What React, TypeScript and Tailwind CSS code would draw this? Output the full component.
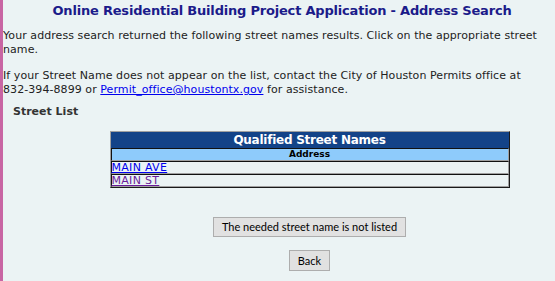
import React from "react";

export default function App() {
  return (
    <div className="w-[555px] h-[281px] overflow-hidden bg-[#ebf3f4] border-l-[3px] border-[#c865a3] font-['DejaVu_Sans',Verdana,sans-serif] text-[#222]">
      <h1 className="pt-[2px] pl-[6px] text-center text-[13px] tracking-[-0.2px] leading-[17px] font-bold text-[#1b1b8a]">
        Online Residential Building Project Application - Address Search
      </h1>
      <p className="mt-[10px] text-[11px] tracking-[0.07px] leading-[14px]">
        Your address search returned the following street names results. Click on the appropriate street name.
      </p>
      <p className="mt-[12px] text-[11px] tracking-[0.07px] leading-[14px]">
        If your Street Name does not appear on the list, contact the City of Houston Permits office at{" "}
        <span className="whitespace-nowrap">832-394-8899</span> or{" "}
        <a href="#" className="text-[#0000ee] underline">Permit_office@houstontx.gov</a> for assistance.
      </p>
      <div className="mt-[8px] pl-[10px] text-[11px] leading-[14px] font-bold text-[#333]">Street List</div>
      <div className="mt-[12px] pl-[61px] flex justify-center">
        <table className="w-[400px] border-separate border-spacing-0 border-t border-l border-t-[#a0a0a0] border-l-[#a0a0a0] border-r border-b border-r-[#1a1a1a] border-b-[#1a1a1a]">
          <tbody>
            <tr>
              <td className="bg-[#134388] text-white text-center font-bold text-[12px] tracking-[-0.25px] leading-[14px] border border-[#134388]">
                Qualified Street Names
              </td>
            </tr>
            <tr>
              <td className="bg-[#8ecbfb] text-black text-center font-bold text-[9px] leading-[11px] border border-t-[#111] border-l-[#111] border-b-[#a0a0a0] border-r-[#a0a0a0]">
                Address
              </td>
            </tr>
            <tr>
              <td className="text-[11px] tracking-[0.3px] leading-[11px] border border-t-[#111] border-l-[#111] border-b-[#a0a0a0] border-r-[#a0a0a0]">
                <a href="#" className="text-[#0000ee] underline">MAIN AVE</a>
              </td>
            </tr>
            <tr>
              <td className="text-[11px] tracking-[0.3px] leading-[11px] border border-t-[#111] border-l-[#111] border-b-[#a0a0a0] border-r-[#a0a0a0]">
                <a href="#" className="text-[#6a1b9a] underline">MAIN ST</a>
              </td>
            </tr>
          </tbody>
        </table>
      </div>
      <div className="mt-[29px] pl-[61px] flex flex-col items-center gap-[13px] font-['Lato',sans-serif]">
        <button className="h-[20px] w-[193px] bg-[#e1e1e1] border border-[#adadad] text-[11px] leading-[18px] text-black">
          The needed street name is not listed
        </button>
        <button className="h-[21px] w-[41px] bg-[#e1e1e1] border border-[#adadad] text-[11px] leading-[19px] text-black">
          Back
        </button>
      </div>
    </div>
  );
}
